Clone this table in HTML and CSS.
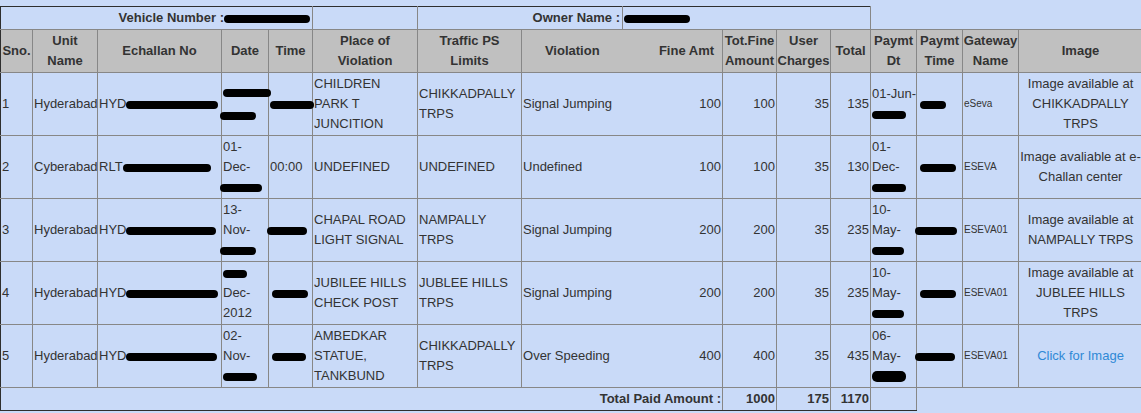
FILE: index.html
```html
<!DOCTYPE html>
<html>
<head>
<meta charset="utf-8">
<title>E-Challan Details</title>
<link rel="stylesheet" href="styles.css">
</head>
<body>
<table class="challan">
  <colgroup>
    <col class="c-sno"><col class="c-unit"><col class="c-echallan"><col class="c-date"><col class="c-time">
    <col class="c-place"><col class="c-ps"><col class="c-viol"><col class="c-fine"><col class="c-tot">
    <col class="c-user"><col class="c-total"><col class="c-pdt"><col class="c-ptime"><col class="c-gw"><col class="c-img">
  </colgroup>
  <tr class="info">
    <td colspan="5" class="info-label">Vehicle Number :<span class="blob w86"></span></td>
    <td></td>
    <td colspan="2" class="info-label">Owner Name :</td>
    <td colspan="4" class="info-value"><span class="blob w66"></span></td>
  </tr>
  <tr class="head">
    <th>Sno.</th>
    <th>Unit<br>Name</th>
    <th>Echallan No</th>
    <th>Date</th>
    <th>Time</th>
    <th>Place of<br>Violation</th>
    <th>Traffic PS<br>Limits</th>
    <th class="viol">Violation</th>
    <th class="fine-head">Fine Amt</th>
    <th>Tot.Fine<br>Amount</th>
    <th>User<br>Charges</th>
    <th>Total</th>
    <th>Paymt<br>Dt</th>
    <th>Paymt<br>Time</th>
    <th>Gateway<br>Name</th>
    <th>Image</th>
  </tr>
  <tr>
    <td>1</td>
    <td>Hyderabad</td>
    <td>HYD<span class="blob w92"></span></td>
    <td><div class="stack"><span class="blob w48"></span><span class="blob w36 shift"></span></div></td>
    <td><span class="blob w44"></span></td>
    <td>CHILDREN<br>PARK T<br>JUNCITION</td>
    <td>CHIKKADPALLY<br>TRPS</td>
    <td class="viol">Signal Jumping</td>
    <td class="num fine">100</td>
    <td class="num">100</td>
    <td class="num">35</td>
    <td class="num">135</td>
    <td>01-Jun-<br><span class="blob w34"></span></td>
    <td><span class="blob w26 push"></span></td>
    <td class="gw">eSeva</td>
    <td class="img">Image available at<br>CHIKKADPALLY<br>TRPS</td>
  </tr>
  <tr>
    <td>2</td>
    <td>Cyberabad</td>
    <td>RLT<span class="blob w88"></span></td>
    <td>01-<br>Dec-<br><span class="blob w42 shift"></span></td>
    <td>00:00</td>
    <td>UNDEFINED</td>
    <td>UNDEFINED</td>
    <td class="viol">Undefined</td>
    <td class="num fine">100</td>
    <td class="num">100</td>
    <td class="num">35</td>
    <td class="num">130</td>
    <td>01-<br>Dec-<br><span class="blob w34"></span></td>
    <td><span class="blob w36 push"></span></td>
    <td class="gw">ESEVA</td>
    <td class="img">Image avaliable at e-<br>Challan center</td>
  </tr>
  <tr>
    <td>3</td>
    <td>Hyderabad</td>
    <td>HYD<span class="blob w90"></span></td>
    <td>13-<br>Nov-<br><span class="blob w36 shift"></span></td>
    <td><span class="blob w40 shift"></span></td>
    <td>CHAPAL ROAD<br>LIGHT SIGNAL</td>
    <td>NAMPALLY<br>TRPS</td>
    <td class="viol">Signal Jumping</td>
    <td class="num fine">200</td>
    <td class="num">200</td>
    <td class="num">35</td>
    <td class="num">235</td>
    <td>10-<br>May-<br><span class="blob w32"></span></td>
    <td><span class="blob w42 shift"></span></td>
    <td class="gw">ESEVA01</td>
    <td class="img">Image available at<br>NAMPALLY TRPS</td>
  </tr>
  <tr>
    <td>4</td>
    <td>Hyderabad</td>
    <td>HYD<span class="blob w92"></span></td>
    <td><span class="blob w24"></span><br>Dec-<br>2012</td>
    <td><span class="blob w36 push"></span></td>
    <td>JUBILEE HILLS<br>CHECK POST</td>
    <td>JUBLEE HILLS<br>TRPS</td>
    <td class="viol">Signal Jumping</td>
    <td class="num fine">200</td>
    <td class="num">200</td>
    <td class="num">35</td>
    <td class="num">235</td>
    <td>10-<br>May-<br><span class="blob w32"></span></td>
    <td><span class="blob w36 push"></span></td>
    <td class="gw">ESEVA01</td>
    <td class="img">Image available at<br>JUBLEE HILLS<br>TRPS</td>
  </tr>
  <tr>
    <td>5</td>
    <td>Hyderabad</td>
    <td>HYD<span class="blob w91"></span></td>
    <td>02-<br>Nov-<br><span class="blob w34"></span></td>
    <td><span class="blob w34 push"></span></td>
    <td>AMBEDKAR<br>STATUE,<br>TANKBUND</td>
    <td>CHIKKADPALLY<br>TRPS</td>
    <td class="viol">Over Speeding</td>
    <td class="num fine">400</td>
    <td class="num">400</td>
    <td class="num">35</td>
    <td class="num">435</td>
    <td>06-<br>May-<br><span class="blob w34 tall"></span></td>
    <td><span class="blob w40 shift"></span></td>
    <td class="gw">ESEVA01</td>
    <td class="img"><a href="#" class="img-link">Click for Image</a></td>
  </tr>
  <tr class="foot">
    <td colspan="9" class="foot-label">Total Paid Amount :</td>
    <td class="num">1000</td>
    <td class="num">175</td>
    <td class="num">1170</td>
    <td></td>
  </tr>
</table>
</body>
</html>
```

FILE: styles.css
```css
html {
  overflow: hidden;
}

body {
  margin: 0;
  background: #c9daf8;
  font-family: "Liberation Sans", Arial, sans-serif;
  font-size: 13px;
  color: #333333;
}

.challan {
  border-collapse: collapse;
  table-layout: fixed;
  width: 1142px;
  margin-top: 6px;
  line-height: 20px;
}

.c-sno { width: 32px; }
.c-unit { width: 65px; }
.c-echallan { width: 124px; }
.c-date { width: 47px; }
.c-time { width: 44px; }
.c-place { width: 105px; }
.c-ps { width: 104px; }
.c-viol { width: 101px; }
.c-fine { width: 100px; }
.c-tot { width: 54px; }
.c-user { width: 54px; }
.c-total { width: 40px; }
.c-pdt { width: 46px; }
.c-ptime { width: 46px; }
.c-gw { width: 56px; }
.c-img { width: 124px; }

.challan td,
.challan th {
  border: 1px solid #878787;
  padding: 1px 1px;
  vertical-align: middle;
  text-align: left;
  white-space: nowrap;
}

.challan td:first-child,
.challan th:first-child {
  border-left-color: #2e2e2e;
}

.info td {
  border-top-color: #2e2e2e;
  font-weight: bold;
}

.info-label {
  text-align: right !important;
  padding-right: 2px !important;
}

.info-value {
  text-align: left;
}

.head th {
  background: #c0c0c0;
  font-weight: bold;
  text-align: center;
  padding: 1px 0;
}

.head th.fine-head {
  text-align: right;
  padding-right: 8px;
}

.challan .viol {
  border-right-style: hidden;
}

.challan .num {
  text-align: right;
}

.gw {
  font-size: 10px;
}

.challan .img {
  text-align: center;
}

.img-link {
  color: #2f89d6;
  text-decoration: none;
}

.foot td {
  border-bottom-color: #2e2e2e;
  font-weight: bold;
}

.challan .foot-label {
  text-align: right;
}

.stack {
  display: flex;
  flex-direction: column;
  gap: 15px;
}

.blob {
  display: inline-block;
  height: 8px;
  border-radius: 4px;
  background: #000000;
  vertical-align: middle;
}

.blob.tall {
  height: 11px;
  border-radius: 5px;
}

.shift {
  margin-left: -3px;
}

.push {
  margin-left: 2px;
}

.w24 { width: 24px; }
.w26 { width: 26px; }
.w32 { width: 32px; }
.w34 { width: 34px; }
.w36 { width: 36px; }
.w40 { width: 40px; }
.w42 { width: 42px; }
.w44 { width: 44px; }
.w48 { width: 48px; }
.w66 { width: 66px; }
.w86 { width: 86px; }
.w88 { width: 88px; }
.w90 { width: 90px; }
.w91 { width: 91px; }
.w92 { width: 92px; }
```
